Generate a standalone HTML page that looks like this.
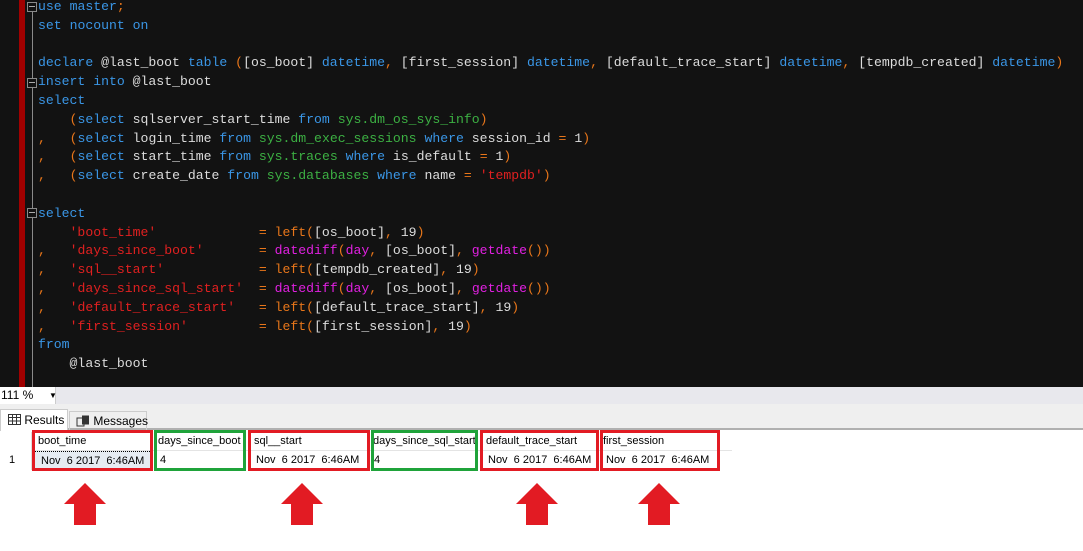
<!DOCTYPE html>
<html><head><meta charset="utf-8"><style>
*{margin:0;padding:0;box-sizing:border-box}
body{width:1083px;height:551px;overflow:hidden;background:#fff;position:relative;font-family:"Liberation Sans",sans-serif}
#ed{position:absolute;left:0;top:0;width:1083px;height:387px;background:#121212;overflow:hidden}
#bar{position:absolute;left:19px;top:0;width:6px;height:387px;background:#a00000}
#gl{position:absolute;left:32px;top:12px;width:1px;height:375px;background:#8a8a8a}
.cb{position:absolute;left:27px;width:10px;height:10px;border:1px solid #8a8a8a;background:#121212}
.cb:after{content:"";position:absolute;left:1px;top:3px;width:6px;height:1px;background:#aaa}
pre{position:absolute;left:38px;top:-2px;font-family:"Liberation Mono",monospace;font-size:13.15px;line-height:18.8px;color:#dcdcdc;white-space:pre}
.k{color:#3a96e6}.o{color:#e8761a}.s{color:#e02020}.g{color:#3cb043}.m{color:#e020e0}
#tb{position:absolute;left:0;top:387px;width:1083px;height:17px;background:#e8e8ed}
#zm{position:absolute;left:0;top:387px;width:56px;height:17px;background:#fff;border-right:1px solid #ccc;font-size:12px;line-height:17px;padding-left:1px;color:#000}
#tabs{position:absolute;left:0;top:404px;width:1083px;height:26px;background:#efefef;border-bottom:2px solid #b0b0b0}
.tab{position:absolute;top:5px;height:22px;font-size:12px;line-height:20px;color:#000;white-space:nowrap}
#grid{position:absolute;left:0;top:432px;font-size:11px;color:#000}
.c{position:absolute;height:19px;line-height:19px;white-space:pre}
.bx{position:absolute;border:3px solid #e21b23}
.gx{border-color:#1fa33a}
.ar{position:absolute;top:483px;width:42px;height:42px}
</style></head><body>
<div id="ed"><div id="bar"></div><div id="gl"></div>
<div class="cb" style="top:2px"></div><div class="cb" style="top:78px"></div><div class="cb" style="top:208px"></div>
<pre><span class="k">use</span> <span class="k">master</span><span class="o">;</span>
<span class="k">set</span> <span class="k">nocount</span> <span class="k">on</span>

<span class="k">declare</span> @last_boot <span class="k">table</span> <span class="o">(</span>[os_boot] <span class="k">datetime</span><span class="o">,</span> [first_session] <span class="k">datetime</span><span class="o">,</span> [default_trace_start] <span class="k">datetime</span><span class="o">,</span> [tempdb_created] <span class="k">datetime</span><span class="o">)</span>
<span class="k">insert</span> <span class="k">into</span> @last_boot
<span class="k">select</span>
    <span class="o">(</span><span class="k">select</span> sqlserver_start_time <span class="k">from</span> <span class="g">sys.dm_os_sys_info</span><span class="o">)</span>
<span class="o">,</span>   <span class="o">(</span><span class="k">select</span> login_time <span class="k">from</span> <span class="g">sys.dm_exec_sessions</span> <span class="k">where</span> session_id <span class="o">=</span> 1<span class="o">)</span>
<span class="o">,</span>   <span class="o">(</span><span class="k">select</span> start_time <span class="k">from</span> <span class="g">sys.traces</span> <span class="k">where</span> is_default <span class="o">=</span> 1<span class="o">)</span>
<span class="o">,</span>   <span class="o">(</span><span class="k">select</span> create_date <span class="k">from</span> <span class="g">sys.databases</span> <span class="k">where</span> name <span class="o">=</span> <span class="s">'tempdb'</span><span class="o">)</span>

<span class="k">select</span>
    <span class="s">'boot_time'</span>             <span class="o">=</span> <span class="o">left(</span>[os_boot]<span class="o">,</span> 19<span class="o">)</span>
<span class="o">,</span>   <span class="s">'days_since_boot'</span>       <span class="o">=</span> <span class="m">datediff</span><span class="o">(</span><span class="m">day</span><span class="o">,</span> [os_boot]<span class="o">,</span> <span class="m">getdate</span><span class="o">())</span>
<span class="o">,</span>   <span class="s">'sql__start'</span>            <span class="o">=</span> <span class="o">left(</span>[tempdb_created]<span class="o">,</span> 19<span class="o">)</span>
<span class="o">,</span>   <span class="s">'days_since_sql_start'</span>  <span class="o">=</span> <span class="m">datediff</span><span class="o">(</span><span class="m">day</span><span class="o">,</span> [os_boot]<span class="o">,</span> <span class="m">getdate</span><span class="o">())</span>
<span class="o">,</span>   <span class="s">'default_trace_start'</span>   <span class="o">=</span> <span class="o">left(</span>[default_trace_start]<span class="o">,</span> 19<span class="o">)</span>
<span class="o">,</span>   <span class="s">'first_session'</span>         <span class="o">=</span> <span class="o">left(</span>[first_session]<span class="o">,</span> 19<span class="o">)</span>
<span class="k">from</span>
    @last_boot</pre></div>
<div id="tb"></div>
<div id="zm">111 % <span style="position:absolute;left:49px;top:0;font-size:8px">▼</span></div>
<div id="tabs">
<div class="tab" style="left:0;width:68px;background:#fff;border:1px solid #ccc;border-bottom:none;padding-left:7px"><svg width="13" height="11" style="vertical-align:-1px"><rect x="0.5" y="0.5" width="12" height="10" fill="none" stroke="#333"/><path d="M0 3.5H13M0 7H13M4.5 0V11M8.5 0V11" stroke="#333"/></svg> Results</div>
<div class="tab" style="left:69px;width:78px;border:1px solid #ccc;border-bottom:none;padding-left:6px;top:7px;height:20px;line-height:19px"><svg width="14" height="12" style="vertical-align:-2px"><rect x="1" y="3" width="7" height="8" fill="none" stroke="#333"/><rect x="6" y="0.5" width="7" height="9" fill="#333"/></svg> Messages</div>
</div>
<div id="grid">
<div class="c" style="left:0;top:0;width:32px;height:38px;border-right:1px solid #ddd"></div>
<div class="c" style="left:9px;top:19px">1</div>
<div class="c" style="left:38px;top:0">boot_time</div>
<div class="c" style="left:35px;top:19px;width:115px;background:#e6ecf2;border-top:1px dotted #000;padding-left:6px">Nov  6 2017  6:46AM</div>
<div class="c" style="left:158px;top:0">days_since_boot</div>
<div class="c" style="left:160px;top:19px">4</div>
<div class="c" style="left:254px;top:0">sql__start</div>
<div class="c" style="left:256px;top:19px">Nov  6 2017  6:46AM</div>
<div class="c" style="left:373px;top:0">days_since_sql_start</div>
<div class="c" style="left:374px;top:19px">4</div>
<div class="c" style="left:486px;top:0">default_trace_start</div>
<div class="c" style="left:488px;top:19px">Nov  6 2017  6:46AM</div>
<div class="c" style="left:603px;top:0">first_session</div>
<div class="c" style="left:606px;top:19px">Nov  6 2017  6:46AM</div>
<div style="position:absolute;left:32px;top:18px;width:700px;height:1px;background:#e4e4e4"></div>
</div>
<div class="bx" style="left:32px;top:430px;width:121px;height:41px"></div>
<div class="bx gx" style="left:154px;top:430px;width:92px;height:41px"></div>
<div class="bx" style="left:248px;top:430px;width:122px;height:41px"></div>
<div class="bx gx" style="left:371px;top:430px;width:107px;height:41px"></div>
<div class="bx" style="left:480px;top:430px;width:119px;height:41px"></div>
<div class="bx" style="left:600px;top:430px;width:120px;height:41px"></div>
<svg class="ar" style="left:64px" viewBox="0 0 42 42"><path d="M21 0L42 21H32V42H10V21H0Z" fill="#e21b23"/></svg>
<svg class="ar" style="left:281px" viewBox="0 0 42 42"><path d="M21 0L42 21H32V42H10V21H0Z" fill="#e21b23"/></svg>
<svg class="ar" style="left:516px" viewBox="0 0 42 42"><path d="M21 0L42 21H32V42H10V21H0Z" fill="#e21b23"/></svg>
<svg class="ar" style="left:638px" viewBox="0 0 42 42"><path d="M21 0L42 21H32V42H10V21H0Z" fill="#e21b23"/></svg>
</body></html>
